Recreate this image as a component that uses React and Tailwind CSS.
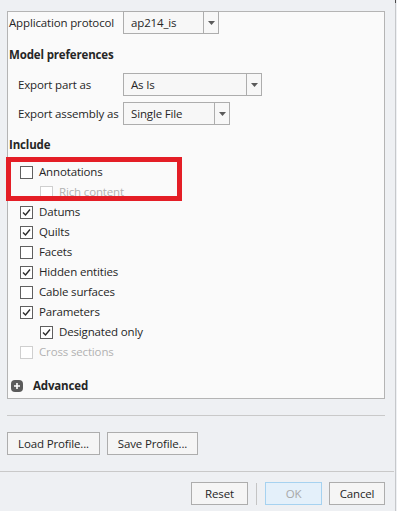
import React from 'react';

function Check({ checked, disabled }) {
    return (
        <span
            className={`w-[13px] h-[13px] flex-shrink-0 border bg-white flex items-center justify-center ${disabled ? 'border-[#cfcfcf]' : 'border-[#5f5f5f]'}`}
        >
            {checked && (
                <svg width="9" height="9" viewBox="0 0 9 9">
                    <path d="M1 4.5 L3.5 7 L8 1.5" fill="none" stroke="#2b2b2b" strokeWidth="1.4" />
                </svg>
            )}
        </span>
    );
}

function CheckRow({ label, checked, disabled, indent }) {
    return (
        <div className={`h-5 flex items-center gap-[6px] ${indent ? 'pl-8' : 'pl-3'}`}>
            <Check checked={checked} disabled={disabled} />
            <span className={disabled ? 'text-[#b2b2b2]' : ''}>{label}</span>
        </div>
    );
}

function Select({ value, width }) {
    return (
        <div className={`h-[23px] flex border border-[#adadad] bg-[#f7f7f7] ${width}`}>
            <div className="flex-1 flex items-center pl-[7px]">{value}</div>
            <div className="w-[15px] border-l border-[#adadad] flex items-center justify-center">
                <svg width="7" height="4" viewBox="0 0 7 4">
                    <path d="M0 0 H7 L3.5 4 Z" fill="#5a5a5a" />
                </svg>
            </div>
        </div>
    );
}

function Button({ children, className = '' }) {
    return (
        <button className={`h-[23px] border border-[#adadad] bg-[#f5f5f5] flex items-center justify-center ${className}`}>
            {children}
        </button>
    );
}

export default function App() {
    return (
        <div
            className="w-[397px] h-[511px] bg-[#eef0f3] flex text-[11.5px] leading-[16px] tracking-[-0.15px] whitespace-nowrap text-[#262626] overflow-hidden"
            style={{ fontFamily: '"Open Sans", "Noto Sans", sans-serif' }}
        >
            <div className="w-[395px] flex flex-col">
                {/* Options panel */}
                <div className="ml-[7px] mt-[11px] w-[378px] h-[388px] border border-[#b4b4b4] bg-[#fafafa] relative flex flex-col">
                    <div className="-mt-px flex items-center">
                        <span className="w-[115px] pl-px">Application protocol</span>
                        <Select value="ap214_is" width="w-[96px]" />
                    </div>

                    <div className="mt-[11px] h-5 flex items-center pl-px font-bold">Model preferences</div>

                    <div className="mt-2 flex items-center">
                        <span className="w-[115px] pl-[10px]">Export part as</span>
                        <Select value="As Is" width="w-[139px]" />
                    </div>
                    <div className="mt-[6px] flex items-center">
                        <span className="w-[115px] pl-[10px]">Export assembly as</span>
                        <Select value="Single File" width="w-[107px]" />
                    </div>

                    <div className="mt-[10px] h-5 flex items-center pl-px font-bold">Include</div>

                    <div className="mt-[7px] flex flex-col">
                        <CheckRow label="Annotations" />
                        <CheckRow label="Rich content" disabled indent />
                        <CheckRow label="Datums" checked />
                        <CheckRow label="Quilts" checked />
                        <CheckRow label="Facets" />
                        <CheckRow label="Hidden entities" checked />
                        <CheckRow label="Cable surfaces" />
                        <CheckRow label="Parameters" checked />
                        <CheckRow label="Designated only" checked indent />
                        <CheckRow label="Cross sections" disabled />
                    </div>

                    <div className="mt-[14px] h-5 flex items-center gap-[10px] pl-[3px] font-bold">
                        <svg width="12" height="12" viewBox="0 0 12 12">
                            <rect x="0" y="0" width="12" height="12" rx="4" fill="#5b5b5b" />
                            <path d="M6 3 V9 M3 6 H9" stroke="#fff" strokeWidth="1.6" />
                        </svg>
                        <span>Advanced</span>
                    </div>

                    {/* Highlight frame */}
                    <div className="absolute left-[-2px] top-[145px] w-[176px] h-[44px] border-[5px] border-[#e41e26]" />
                </div>

                <div className="ml-[7px] mt-4 w-[378px] h-px bg-[#c9c9c9]" />

                <div className="ml-[7px] mt-4 flex gap-[7px]">
                    <Button className="w-[93px]">Load Profile...</Button>
                    <Button className="w-[91px]">Save Profile...</Button>
                </div>

                <div className="mt-4 w-[394px] h-px bg-[#c9c9c9]" />

                <div className="mt-[10px] flex items-center pl-[191px]">
                    <Button className="w-[57px]">Reset</Button>
                    <div className="ml-2 w-px h-[22px] bg-[#c4c4c4]" />
                    <button className="ml-2 w-[57px] h-[23px] border border-[#a6d2f0] bg-[#e4f0fa] text-[#a8a8a8] flex items-center justify-center">OK</button>
                    <Button className="ml-[7px] w-[56px]">Cancel</Button>
                </div>
            </div>

            {/* Window edge */}
            <div className="w-px flex flex-col bg-[#c6c8cb]">
                <div className="h-[3px] bg-[#4a4a4a]" />
            </div>
        </div>
    );
}
